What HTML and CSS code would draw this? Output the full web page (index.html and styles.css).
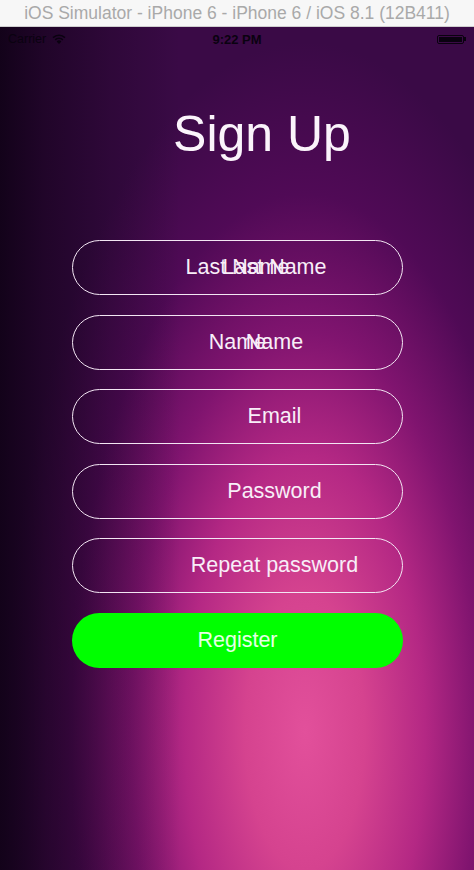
FILE: index.html
```html
<!DOCTYPE html>
<html>
<head>
<meta charset="utf-8">
<title>Sign Up</title>
<link rel="stylesheet" href="styles.css">
</head>
<body>
<div class="titlebar">iOS Simulator - iPhone 6 - iPhone 6 / iOS 8.1 (12B411)</div>
<div class="screen">
  <div class="statusbar">
    <div class="sb-left">
      <span class="carrier">Carrier</span>
      <svg class="wifi" width="14" height="10" viewBox="0 0 14 10">
        <path d="M7 10 L4.6 7.4 A3.4 3.4 0 0 1 9.4 7.4 Z" fill="#0a0210"/>
        <path d="M2.6 5.3 A6.2 6.2 0 0 1 11.4 5.3 L10.3 6.4 A4.7 4.7 0 0 0 3.7 6.4 Z" fill="#0a0210"/>
        <path d="M0.5 3.1 A9.2 9.2 0 0 1 13.5 3.1 L12.4 4.2 A7.7 7.7 0 0 0 1.6 4.2 Z" fill="#0a0210"/>
      </svg>
    </div>
    <div class="sb-time">9:22 PM</div>
    <div class="sb-right">
      <span class="battery"><span class="battery-fill"></span></span><span class="battery-nub"></span>
    </div>
  </div>
  <h1 class="title">Sign Up</h1>
  <div class="form">
    <div class="field"><span class="label">Last Name</span><span class="label-ghost">Last Name</span></div>
    <div class="field"><span class="label">Name</span><span class="label-ghost">Name</span></div>
    <div class="field"><span class="label">Email</span></div>
    <div class="field"><span class="label">Password</span></div>
    <div class="field"><span class="label">Repeat password</span></div>
    <div class="button">Register</div>
  </div>
</div>
</body>
</html>
```

FILE: styles.css
```css
html, body {
  margin: 0;
  padding: 0;
}
body {
  width: 474px;
  height: 870px;
  overflow: hidden;
  font-family: "Liberation Sans", Arial, sans-serif;
  background: #f6f6f6;
}
.titlebar {
  height: 27px;
  box-sizing: border-box;
  border-bottom: 1px solid #cfcfcf;
  background: #f7f7f7;
  color: #a9a9a9;
  font-size: 17.5px;
  line-height: 26px;
  text-align: center;
  white-space: nowrap;
}
.screen {
  height: 843px;
  background:
    linear-gradient(to right, rgba(12,1,18,0.85) 0px, rgba(12,1,18,0.55) 45px, rgba(12,1,18,0.25) 110px, rgba(12,1,18,0) 180px),
    radial-gradient(ellipse 300px 690px at 305px 705px, #e2509b 0%, #d5438f 20%, #b42884 40%, #80146f 58%, #500a56 78%, #3a0a46 100%),
    #3a0a46;
  display: flex;
  flex-direction: column;
}
.statusbar {
  height: 24px;
  display: flex;
  align-items: center;
  justify-content: space-between;
  padding: 0 8px;
  color: #0a0210;
  font-size: 12.5px;
  position: relative;
}
.sb-left {
  display: flex;
  align-items: center;
  gap: 6px;
}
.sb-time {
  position: absolute;
  left: 0;
  right: 0;
  text-align: center;
  font-weight: bold;
  font-size: 13px;
}
.sb-right {
  display: flex;
  align-items: center;
}
.battery {
  width: 27px;
  height: 9px;
  border: 1px solid #0a0210;
  border-radius: 2px;
  padding: 1px;
  box-sizing: border-box;
  display: flex;
}
.battery-fill {
  flex: 1;
  background: #0a0210;
}
.battery-nub {
  width: 2px;
  height: 4px;
  background: #0a0210;
}
.title {
  margin: 58px 0 0 0;
  padding-left: 50px;
  text-align: center;
  font-size: 50px;
  line-height: 50px;
  font-weight: normal;
  color: #fbf4fb;
}
.form {
  margin: 81px 0 0 72px;
  width: 331px;
  display: flex;
  flex-direction: column;
  gap: 19.5px;
}
.field {
  position: relative;
  height: 55px;
  box-sizing: border-box;
  border: 1.5px solid #f3e6f3;
  border-radius: 27.5px;
  display: flex;
  align-items: center;
  justify-content: center;
  padding-left: 74px;
  font-size: 21.5px;
  color: #f8eef8;
  white-space: nowrap;
}
.label-ghost {
  position: absolute;
  left: 0;
  right: 0;
  top: 0;
  bottom: 0;
  display: flex;
  align-items: center;
  justify-content: center;
}
.button {
  height: 55px;
  border-radius: 27.5px;
  background: #00ff00;
  color: #e6ffe6;
  font-size: 21.5px;
  display: flex;
  align-items: center;
  justify-content: center;
}
```
